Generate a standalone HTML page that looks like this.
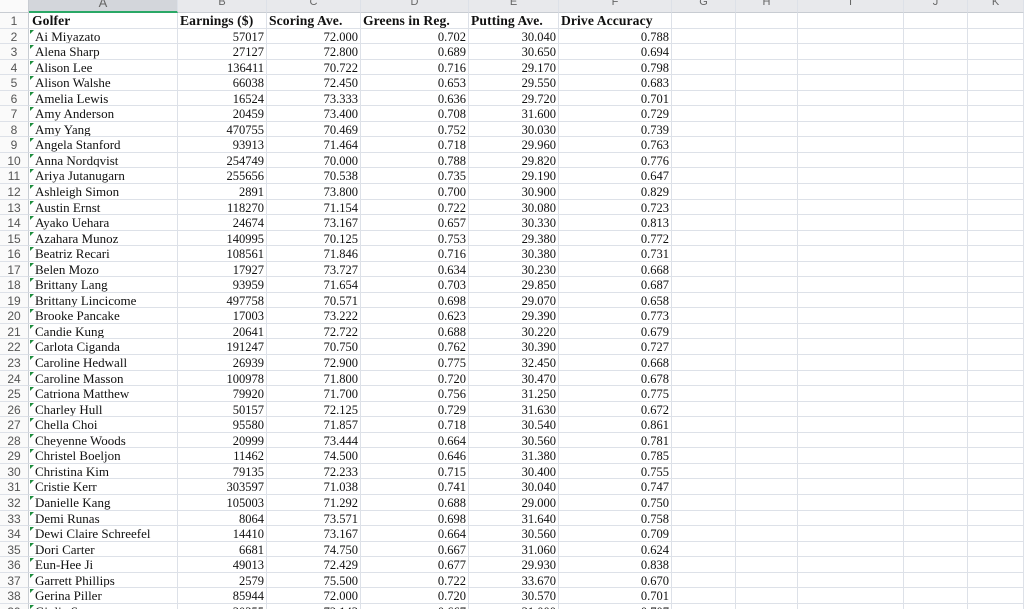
<!DOCTYPE html>
<html><head><meta charset="utf-8"><style>
*{margin:0;padding:0;box-sizing:border-box}
html,body{width:1024px;height:609px;overflow:hidden}
body{background:#fff;position:relative;font-family:"Liberation Serif",serif;font-size:12.5px;color:#111}
.r{display:grid;grid-template-columns:29px 149px 89px 94px 108px 90px 113px 64px 62px 106px 64px 56px;height:15.55px}
.r>div{border-right:1px solid #dde1e8;border-bottom:1px solid #dde1e8;line-height:16px;white-space:nowrap;overflow:hidden;padding:0 2px;text-align:right;position:relative}
.r>div:first-child{font-family:"Liberation Sans",sans-serif;color:#555;font-size:12px;text-align:center;background:#fafafa;border-right:1px solid #c8ccd2}
.r>div:nth-child(2){text-align:left;padding-left:6px;font-size:13px}
.r>div.g::before{content:"";position:absolute;left:1px;top:1px;border-top:4px solid #1e8e3e;border-right:4px solid transparent}
.h{height:13px}
.h>div{background:#e8e9ec;font-family:"Liberation Sans",sans-serif;color:#666;font-size:11px;text-align:center!important;line-height:5px;border-bottom:1px solid #c8ccd2!important;padding:0!important}
.h>div.s{background:#d3d6db;border-bottom:2px solid #2aa866!important}
.b>div:not(:first-child){font-weight:bold;text-align:left;font-size:13.6px;letter-spacing:0.1px}
.b>div:nth-child(2){padding-left:3px}
</style></head><body>
<div class="r h"><div></div><div class="s">A</div><div>B</div><div>C</div><div>D</div><div>E</div><div>F</div><div>G</div><div>H</div><div>I</div><div>J</div><div>K</div></div>
<div class="r b"><div>1</div><div>Golfer</div><div>Earnings ($)</div><div>Scoring Ave.</div><div>Greens in Reg.</div><div>Putting Ave.</div><div>Drive Accuracy</div><div></div><div></div><div></div><div></div><div></div></div>
<div class="r"><div>2</div><div class="g">Ai Miyazato</div><div>57017</div><div>72.000</div><div>0.702</div><div>30.040</div><div>0.788</div><div></div><div></div><div></div><div></div><div></div></div>
<div class="r"><div>3</div><div class="g">Alena Sharp</div><div>27127</div><div>72.800</div><div>0.689</div><div>30.650</div><div>0.694</div><div></div><div></div><div></div><div></div><div></div></div>
<div class="r"><div>4</div><div class="g">Alison Lee</div><div>136411</div><div>70.722</div><div>0.716</div><div>29.170</div><div>0.798</div><div></div><div></div><div></div><div></div><div></div></div>
<div class="r"><div>5</div><div class="g">Alison Walshe</div><div>66038</div><div>72.450</div><div>0.653</div><div>29.550</div><div>0.683</div><div></div><div></div><div></div><div></div><div></div></div>
<div class="r"><div>6</div><div class="g">Amelia Lewis</div><div>16524</div><div>73.333</div><div>0.636</div><div>29.720</div><div>0.701</div><div></div><div></div><div></div><div></div><div></div></div>
<div class="r"><div>7</div><div class="g">Amy Anderson</div><div>20459</div><div>73.400</div><div>0.708</div><div>31.600</div><div>0.729</div><div></div><div></div><div></div><div></div><div></div></div>
<div class="r"><div>8</div><div class="g">Amy Yang</div><div>470755</div><div>70.469</div><div>0.752</div><div>30.030</div><div>0.739</div><div></div><div></div><div></div><div></div><div></div></div>
<div class="r"><div>9</div><div class="g">Angela Stanford</div><div>93913</div><div>71.464</div><div>0.718</div><div>29.960</div><div>0.763</div><div></div><div></div><div></div><div></div><div></div></div>
<div class="r"><div>10</div><div class="g">Anna Nordqvist</div><div>254749</div><div>70.000</div><div>0.788</div><div>29.820</div><div>0.776</div><div></div><div></div><div></div><div></div><div></div></div>
<div class="r"><div>11</div><div class="g">Ariya Jutanugarn</div><div>255656</div><div>70.538</div><div>0.735</div><div>29.190</div><div>0.647</div><div></div><div></div><div></div><div></div><div></div></div>
<div class="r"><div>12</div><div class="g">Ashleigh Simon</div><div>2891</div><div>73.800</div><div>0.700</div><div>30.900</div><div>0.829</div><div></div><div></div><div></div><div></div><div></div></div>
<div class="r"><div>13</div><div class="g">Austin Ernst</div><div>118270</div><div>71.154</div><div>0.722</div><div>30.080</div><div>0.723</div><div></div><div></div><div></div><div></div><div></div></div>
<div class="r"><div>14</div><div class="g">Ayako Uehara</div><div>24674</div><div>73.167</div><div>0.657</div><div>30.330</div><div>0.813</div><div></div><div></div><div></div><div></div><div></div></div>
<div class="r"><div>15</div><div class="g">Azahara Munoz</div><div>140995</div><div>70.125</div><div>0.753</div><div>29.380</div><div>0.772</div><div></div><div></div><div></div><div></div><div></div></div>
<div class="r"><div>16</div><div class="g">Beatriz Recari</div><div>108561</div><div>71.846</div><div>0.716</div><div>30.380</div><div>0.731</div><div></div><div></div><div></div><div></div><div></div></div>
<div class="r"><div>17</div><div class="g">Belen Mozo</div><div>17927</div><div>73.727</div><div>0.634</div><div>30.230</div><div>0.668</div><div></div><div></div><div></div><div></div><div></div></div>
<div class="r"><div>18</div><div class="g">Brittany Lang</div><div>93959</div><div>71.654</div><div>0.703</div><div>29.850</div><div>0.687</div><div></div><div></div><div></div><div></div><div></div></div>
<div class="r"><div>19</div><div class="g">Brittany Lincicome</div><div>497758</div><div>70.571</div><div>0.698</div><div>29.070</div><div>0.658</div><div></div><div></div><div></div><div></div><div></div></div>
<div class="r"><div>20</div><div class="g">Brooke Pancake</div><div>17003</div><div>73.222</div><div>0.623</div><div>29.390</div><div>0.773</div><div></div><div></div><div></div><div></div><div></div></div>
<div class="r"><div>21</div><div class="g">Candie Kung</div><div>20641</div><div>72.722</div><div>0.688</div><div>30.220</div><div>0.679</div><div></div><div></div><div></div><div></div><div></div></div>
<div class="r"><div>22</div><div class="g">Carlota Ciganda</div><div>191247</div><div>70.750</div><div>0.762</div><div>30.390</div><div>0.727</div><div></div><div></div><div></div><div></div><div></div></div>
<div class="r"><div>23</div><div class="g">Caroline Hedwall</div><div>26939</div><div>72.900</div><div>0.775</div><div>32.450</div><div>0.668</div><div></div><div></div><div></div><div></div><div></div></div>
<div class="r"><div>24</div><div class="g">Caroline Masson</div><div>100978</div><div>71.800</div><div>0.720</div><div>30.470</div><div>0.678</div><div></div><div></div><div></div><div></div><div></div></div>
<div class="r"><div>25</div><div class="g">Catriona Matthew</div><div>79920</div><div>71.700</div><div>0.756</div><div>31.250</div><div>0.775</div><div></div><div></div><div></div><div></div><div></div></div>
<div class="r"><div>26</div><div class="g">Charley Hull</div><div>50157</div><div>72.125</div><div>0.729</div><div>31.630</div><div>0.672</div><div></div><div></div><div></div><div></div><div></div></div>
<div class="r"><div>27</div><div class="g">Chella Choi</div><div>95580</div><div>71.857</div><div>0.718</div><div>30.540</div><div>0.861</div><div></div><div></div><div></div><div></div><div></div></div>
<div class="r"><div>28</div><div class="g">Cheyenne Woods</div><div>20999</div><div>73.444</div><div>0.664</div><div>30.560</div><div>0.781</div><div></div><div></div><div></div><div></div><div></div></div>
<div class="r"><div>29</div><div class="g">Christel Boeljon</div><div>11462</div><div>74.500</div><div>0.646</div><div>31.380</div><div>0.785</div><div></div><div></div><div></div><div></div><div></div></div>
<div class="r"><div>30</div><div class="g">Christina Kim</div><div>79135</div><div>72.233</div><div>0.715</div><div>30.400</div><div>0.755</div><div></div><div></div><div></div><div></div><div></div></div>
<div class="r"><div>31</div><div class="g">Cristie Kerr</div><div>303597</div><div>71.038</div><div>0.741</div><div>30.040</div><div>0.747</div><div></div><div></div><div></div><div></div><div></div></div>
<div class="r"><div>32</div><div class="g">Danielle Kang</div><div>105003</div><div>71.292</div><div>0.688</div><div>29.000</div><div>0.750</div><div></div><div></div><div></div><div></div><div></div></div>
<div class="r"><div>33</div><div class="g">Demi Runas</div><div>8064</div><div>73.571</div><div>0.698</div><div>31.640</div><div>0.758</div><div></div><div></div><div></div><div></div><div></div></div>
<div class="r"><div>34</div><div class="g">Dewi Claire Schreefel</div><div>14410</div><div>73.167</div><div>0.664</div><div>30.560</div><div>0.709</div><div></div><div></div><div></div><div></div><div></div></div>
<div class="r"><div>35</div><div class="g">Dori Carter</div><div>6681</div><div>74.750</div><div>0.667</div><div>31.060</div><div>0.624</div><div></div><div></div><div></div><div></div><div></div></div>
<div class="r"><div>36</div><div class="g">Eun-Hee Ji</div><div>49013</div><div>72.429</div><div>0.677</div><div>29.930</div><div>0.838</div><div></div><div></div><div></div><div></div><div></div></div>
<div class="r"><div>37</div><div class="g">Garrett Phillips</div><div>2579</div><div>75.500</div><div>0.722</div><div>33.670</div><div>0.670</div><div></div><div></div><div></div><div></div><div></div></div>
<div class="r"><div>38</div><div class="g">Gerina Piller</div><div>85944</div><div>72.000</div><div>0.720</div><div>30.570</div><div>0.701</div><div></div><div></div><div></div><div></div><div></div></div>
<div class="r"><div>39</div><div class="g">Giulia Sergas</div><div>30355</div><div>72.143</div><div>0.667</div><div>31.000</div><div>0.707</div><div></div><div></div><div></div><div></div><div></div></div>
</body></html>
